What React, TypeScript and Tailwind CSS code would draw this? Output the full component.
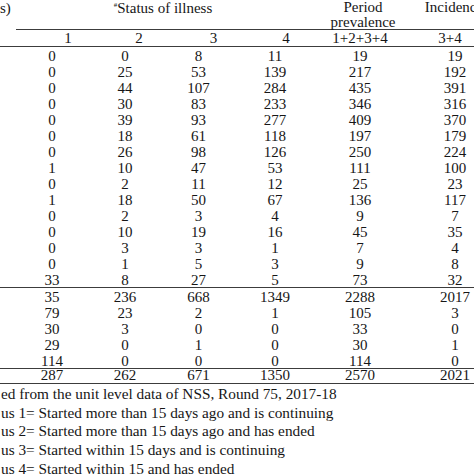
const SERIF = { fontFamily: '"Liberation Serif", "Times New Roman", serif' };

// column widths for the body cells, measured from the centre of each number
const W = ["w-[73px]", "w-[73px]", "w-[74px]", "w-[79px]", "w-[91px]", "w-[99px]"];

const upper: string[][] = [
  ["0", "0", "8", "11", "19", "19"],
  ["0", "25", "53", "139", "217", "192"],
  ["0", "44", "107", "284", "435", "391"],
  ["0", "30", "83", "233", "346", "316"],
  ["0", "39", "93", "277", "409", "370"],
  ["0", "18", "61", "118", "197", "179"],
  ["0", "26", "98", "126", "250", "224"],
  ["1", "10", "47", "53", "111", "100"],
  ["0", "2", "11", "12", "25", "23"],
  ["1", "18", "50", "67", "136", "117"],
  ["0", "2", "3", "4", "9", "7"],
  ["0", "10", "19", "16", "45", "35"],
  ["0", "3", "3", "1", "7", "4"],
  ["0", "1", "5", "3", "9", "8"],
  ["33", "8", "27", "5", "73", "32"],
];

const lower: string[][] = [
  ["35", "236", "668", "1349", "2288", "2017"],
  ["79", "23", "2", "1", "105", "3"],
  ["30", "3", "0", "0", "33", "0"],
  ["29", "0", "1", "0", "30", "1"],
  ["114", "0", "0", "0", "114", "0"],
];

const total = ["287", "262", "671", "1350", "2570", "2021"];

const notes = [
  "ed from the unit level data of NSS, Round 75, 2017-18",
  "us 1= Started more than 15 days ago and is continuing",
  "us 2= Started more than 15 days ago and has ended",
  "us 3= Started within 15 days and is continuing",
  "us 4= Started within 15 and has ended",
];

function Row({ cells, h, lead }: { cells: string[]; h: string; lead: string }) {
  return (
    <div className={`flex ${h} pl-[15.5px]`}>
      {cells.map((c, i) => (
        <div key={i} className={`${W[i]} shrink-0 text-center ${lead}`}>
          {c}
        </div>
      ))}
    </div>
  );
}

export default function App() {
  return (
    <div className="w-[474px] h-[474px] overflow-hidden bg-white text-[#161616] text-[15px]" style={SERIF}>
      <div className="w-[520px]">
        {/* title row */}
        <div className="flex h-[30px]">
          <div className="w-[15.5px] shrink-0 leading-[16px] whitespace-nowrap">s)</div>
          <div className="flex flex-1 border-b border-[#3c3c3c]">
            <div className="w-[299px] shrink-0 text-center leading-[16px] pr-[4px]">
              <span className="relative -top-[6px] text-[7px]">#</span>Status of illness
            </div>
            <div className="w-[91px] shrink-0 text-center leading-[15px] pl-[6px]">
              Period
              <br />
              prevalence
            </div>
            <div className="w-[99px] shrink-0 text-center leading-[15px] pr-[2px]">Incidence</div>
          </div>
        </div>

        {/* column numbers */}
        <div className="flex h-[17px] pl-[15.5px] border-b border-[#3c3c3c]">
          <div className={`${W[0]} shrink-0 text-center leading-[16px] pl-[32px]`}>1</div>
          <div className={`${W[1]} shrink-0 text-center leading-[16px] pl-[28px]`}>2</div>
          <div className={`${W[2]} shrink-0 text-center leading-[16px] pl-[30px]`}>3</div>
          <div className={`${W[3]} shrink-0 text-center leading-[16px] pl-[22px]`}>4</div>
          <div className={`${W[4]} shrink-0 text-center leading-[16px]`}>1+2+3+4</div>
          <div className={`${W[5]} shrink-0 text-center leading-[16px] pr-[10px]`}>3+4</div>
        </div>

        <div className="border-b border-[#3c3c3c]">
          {upper.map((r, i) => (
            <Row key={i} cells={r} h="h-[16px]" lead="leading-[19px]" />
          ))}
        </div>

        <div className="border-b border-[#3c3c3c]">
          {lower.map((r, i) => (
            <Row key={i} cells={r} h="h-[16px]" lead="leading-[18px]" />
          ))}
        </div>

        <div className="border-b border-[#3c3c3c]">
          <Row cells={total} h="h-[14px]" lead="leading-[12px]" />
        </div>

        <div className="pl-[1px] text-[15.3px] leading-[18.7px] pt-[1px] whitespace-nowrap">
          {notes.map((n, i) => (
            <div key={i}>{n}</div>
          ))}
        </div>
      </div>
    </div>
  );
}
